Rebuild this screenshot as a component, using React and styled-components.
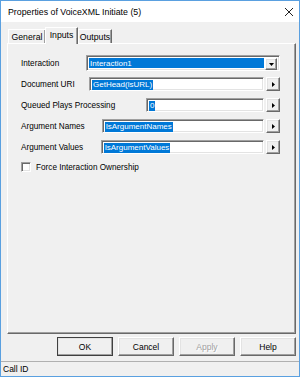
import React from 'react'
import styled, { createGlobalStyle } from 'styled-components'

const GlobalStyle = createGlobalStyle`
  html, body {
    margin: 0;
    padding: 0;
    background: #ffffff;
  }
  body {
    font-family: "Liberation Sans", Arial, sans-serif;
    color: #000;
  }
`

const Window = styled.div`
  width: 300px;
  height: 377px;
  box-sizing: border-box;
  border: 1px solid #5aa0e0;
  display: flex;
  flex-direction: column;
  background: #f0f0f0;
`

const TitleBar = styled.div`
  height: 21px;
  background: #fff;
  display: flex;
  align-items: center;
  justify-content: space-between;
  padding: 0 5px 0 7px;
  font-size: 8.8px;
`

const Body = styled.div`
  flex: 1;
  display: flex;
  flex-direction: column;
  padding: 5px 4px 0 6px;
`

const TabStrip = styled.div`
  display: flex;
  align-items: flex-end;
  height: 16px;
  margin-left: 1px;
`

const Tab = styled.div`
  box-sizing: border-box;
  width: ${p => p.width}px;
  height: ${p => (p.active ? 17 : 14)}px;
  margin: ${p => (p.active ? '0 0 -1px -1px' : '0')};
  display: flex;
  align-items: center;
  justify-content: center;
  font-size: 8.7px;
  padding-bottom: ${p => (p.active ? 2 : 0)}px;
  background: #f0f0f0;
  border-top: 1px solid #fff;
  border-left: 1px solid #fff;
  border-right: 1px solid #696969;
  box-shadow: inset -1px 0 0 #a0a0a0;
  position: relative;
  z-index: ${p => (p.active ? 2 : 0)};
`

const Panel = styled.div`
  box-sizing: border-box;
  width: 289px;
  height: 291px;
  border: 1px solid;
  border-color: #fff #696969 #696969 #fff;
  box-shadow: inset -1px -1px 0 #a0a0a0;
  padding: 11px 0 0 13px;
  display: flex;
  flex-direction: column;
  gap: 5px;
`

const Row = styled.div`
  display: flex;
  align-items: center;
  height: 16px;
  width: 259px;
`

const Label = styled.div`
  width: ${p => p.width}px;
  flex: none;
  font-size: 8.2px;
  white-space: nowrap;
`

const Field = styled.div`
  flex: 1;
  display: flex;
  align-items: center;
  gap: 2px;
`

const Sunken = styled.div`
  box-sizing: border-box;
  border: 1px solid;
  border-color: #a0a0a0 #fff #fff #a0a0a0;
  box-shadow: inset 1px 1px 0 #696969, inset -1px -1px 0 #e3e3e3;
  background: #fff;
`

const TextInput = styled(Sunken)`
  flex: 1;
  height: 14px;
  padding: 2px 0 0 2px;
  font-size: 8px;
  line-height: 10px;
  white-space: nowrap;
  overflow: hidden;
`

const Selected = styled.span`
  display: inline-block;
  background: #0078d7;
  color: #fff;
  padding: 0 1px;
  height: 10px;
  vertical-align: top;
`

const Combo = styled(Sunken)`
  flex: 1;
  height: 16px;
  padding: 2px;
  display: flex;
  gap: 1px;
`

const ComboValue = styled.div`
  flex: 1;
  background: #0078d7;
  color: #fff;
  font-size: 8px;
  line-height: 12px;
  padding-left: 1px;
`

const Raised = styled.div`
  box-sizing: border-box;
  border: 1px solid;
  border-color: #fff #696969 #696969 #fff;
  box-shadow: inset -1px -1px 0 #a0a0a0, inset 1px 1px 0 #e3e3e3;
  background: #f0f0f0;
  display: flex;
  align-items: center;
  justify-content: center;
`

const DropButton = styled(Raised)`
  width: 12px;
  height: 12px;
`

const ArrowButton = styled(Raised)`
  width: 14px;
  height: 14px;
  flex: none;
`

const CheckRow = styled.label`
  display: flex;
  align-items: center;
  gap: 5px;
  height: 12px;
  margin-top: 1px;
  font-size: 8.2px;
`

const CheckBox = styled(Sunken)`
  width: 10px;
  height: 10px;
`

const ButtonRow = styled.div`
  display: flex;
  justify-content: flex-end;
  gap: 5px;
  margin-top: 3px;
  width: 289px;
`

const Button = styled(Raised)`
  width: 56px;
  height: 19px;
  font-size: 8.5px;
  color: ${p => (p.disabled ? '#a0a0a0' : '#000')};
  text-shadow: ${p => (p.disabled ? '1px 1px 0 #fff' : 'none')};
  border-color: ${p => (p.primary ? '#404040' : '#fff #696969 #696969 #fff')};
`

const StatusBar = styled.div`
  height: 14px;
  border-top: 1px solid #b0b0b0;
  display: flex;
  align-items: center;
  padding-left: 2px;
  font-size: 8.5px;
`

const RightArrow = () => (
  <svg width="3" height="5" viewBox="0 0 3 5"><path d="M0 0 L3 2.5 L0 5 Z" fill="#000" /></svg>
)

const DownArrow = () => (
  <svg width="5" height="3" viewBox="0 0 5 3"><path d="M0 0 L5 0 L2.5 3 Z" fill="#000" /></svg>
)

const CloseIcon = () => (
  <svg width="10" height="10" viewBox="0 0 10 10">
    <path d="M1 1 L9 9 M9 1 L1 9" stroke="#222" strokeWidth="1" />
  </svg>
)

const fields = [
  { label: 'Document URI', left: 88, value: 'GetHead(lsURL)' },
  { label: 'Queued Plays Processing', left: 145, value: '0' },
  { label: 'Argument Names', left: 101, value: 'lsArgumentNames' },
  { label: 'Argument Values', left: 100, value: 'lsArgumentValues' },
]

export default function App() {
  return (
    <>
      <GlobalStyle />
      <Window>
        <TitleBar>
          <span>Properties of VoiceXML Initiate (5)</span>
          <CloseIcon />
        </TitleBar>
        <Body>
          <TabStrip>
            <Tab width={38}>General</Tab>
            <Tab width={33} active>Inputs</Tab>
            <Tab width={34}>Outputs</Tab>
          </TabStrip>
          <Panel>
            <Row>
              <Label width={65}>Interaction</Label>
              <Field>
                <Combo>
                  <ComboValue>Interaction1</ComboValue>
                  <DropButton><DownArrow /></DropButton>
                </Combo>
              </Field>
            </Row>
            {fields.map(f => (
              <Row key={f.label}>
                <Label width={f.left - 20}>{f.label}</Label>
                <Field>
                  <TextInput><Selected>{f.value}</Selected></TextInput>
                  <ArrowButton><RightArrow /></ArrowButton>
                </Field>
              </Row>
            ))}
            <CheckRow>
              <CheckBox />
              Force Interaction Ownership
            </CheckRow>
          </Panel>
          <ButtonRow>
            <Button primary>OK</Button>
            <Button>Cancel</Button>
            <Button disabled>Apply</Button>
            <Button>Help</Button>
          </ButtonRow>
        </Body>
        <StatusBar>Call ID</StatusBar>
      </Window>
    </>
  )
}
